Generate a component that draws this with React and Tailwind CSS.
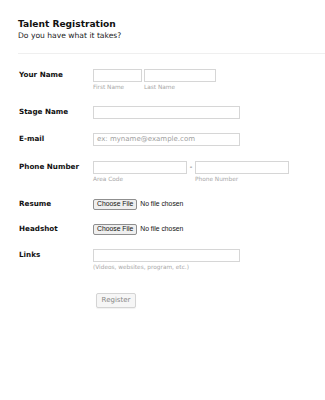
import React from "react";

function Label({ children }) {
  return (
    <div className="w-[74px] h-[13px] shrink-0 flex items-center text-[7.2px] font-bold text-[#111]">
      {children}
    </div>
  );
}

function Field({ className, placeholder }) {
  return (
    <div
      className={`h-[13px] border border-[#d6d6d6] bg-white flex items-center px-[3px] text-[7px] text-[#a0a0a0] ${className}`}
    >
      {placeholder}
    </div>
  );
}

function Sub({ children, className = "" }) {
  return <div className={`mt-[1px] text-[5.8px] text-[#a8a8a8] leading-[8px] ${className}`}>{children}</div>;
}

function FilePick() {
  return (
    <div className="h-[11px] flex items-center gap-[3px] font-['Liberation_Sans',Arial,sans-serif] text-[6.8px] text-[#111]">
      <span className="h-[11px] px-[3px] flex items-center border border-[#8f8f8f] rounded-[2px] bg-[#efefef]">
        Choose File
      </span>
      <span>No file chosen</span>
    </div>
  );
}

export default function App() {
  return (
    <div className="w-[325px] h-[400px] bg-white font-['DejaVu_Sans',Verdana,sans-serif] overflow-hidden">
      <div className="pl-[18px] pt-[18px]">
        <h1 className="text-[9.1px] font-bold leading-[12px] text-[#111]">Talent Registration</h1>
        <p className="mt-[1px] text-[7.6px] leading-[9px] text-[#222]">Do you have what it takes?</p>
        <div className="mt-[13px] border-t border-[#efefef]" />
      </div>

      <div className="pl-[19px]">
        <div className="flex mt-[15px]">
          <Label>Your Name</Label>
          <div className="flex gap-[2px]">
            <div>
              <Field className="w-[49px]" />
              <Sub>First Name</Sub>
            </div>
            <div>
              <Field className="w-[72px]" />
              <Sub>Last Name</Sub>
            </div>
          </div>
        </div>

        <div className="flex mt-[15px]">
          <Label>Stage Name</Label>
          <Field className="w-[147px]" />
        </div>

        <div className="flex mt-[14px]">
          <Label>E-mail</Label>
          <Field className="w-[147px]" placeholder="ex: myname@example.com" />
        </div>

        <div className="flex mt-[15px]">
          <Label>Phone Number</Label>
          <div className="flex">
            <div>
              <Field className="w-[94px]" />
              <Sub>Area Code</Sub>
            </div>
            <div className="w-[8px] h-[13px] flex items-center justify-center text-[7px] text-[#333]">-</div>
            <div>
              <Field className="w-[94px]" />
              <Sub>Phone Number</Sub>
            </div>
          </div>
        </div>

        <div className="flex items-center mt-[15px]">
          <Label>Resume</Label>
          <FilePick />
        </div>

        <div className="flex items-center mt-[12px]">
          <Label>Headshot</Label>
          <FilePick />
        </div>

        <div className="flex mt-[13px]">
          <Label>Links</Label>
          <div>
            <Field className="w-[147px]" />
            <Sub>(Videos, websites, program, etc.)</Sub>
          </div>
        </div>

        <div className="pl-[77px] mt-[22px]">
          <button className="w-[40px] h-[15px] border border-[#d4d4d4] rounded-[2px] bg-[#f6f6f6] text-[7px] text-[#888] flex items-center justify-center shadow-[0_1px_1px_rgba(0,0,0,0.06)]">
            Register
          </button>
        </div>
      </div>
    </div>
  );
}
